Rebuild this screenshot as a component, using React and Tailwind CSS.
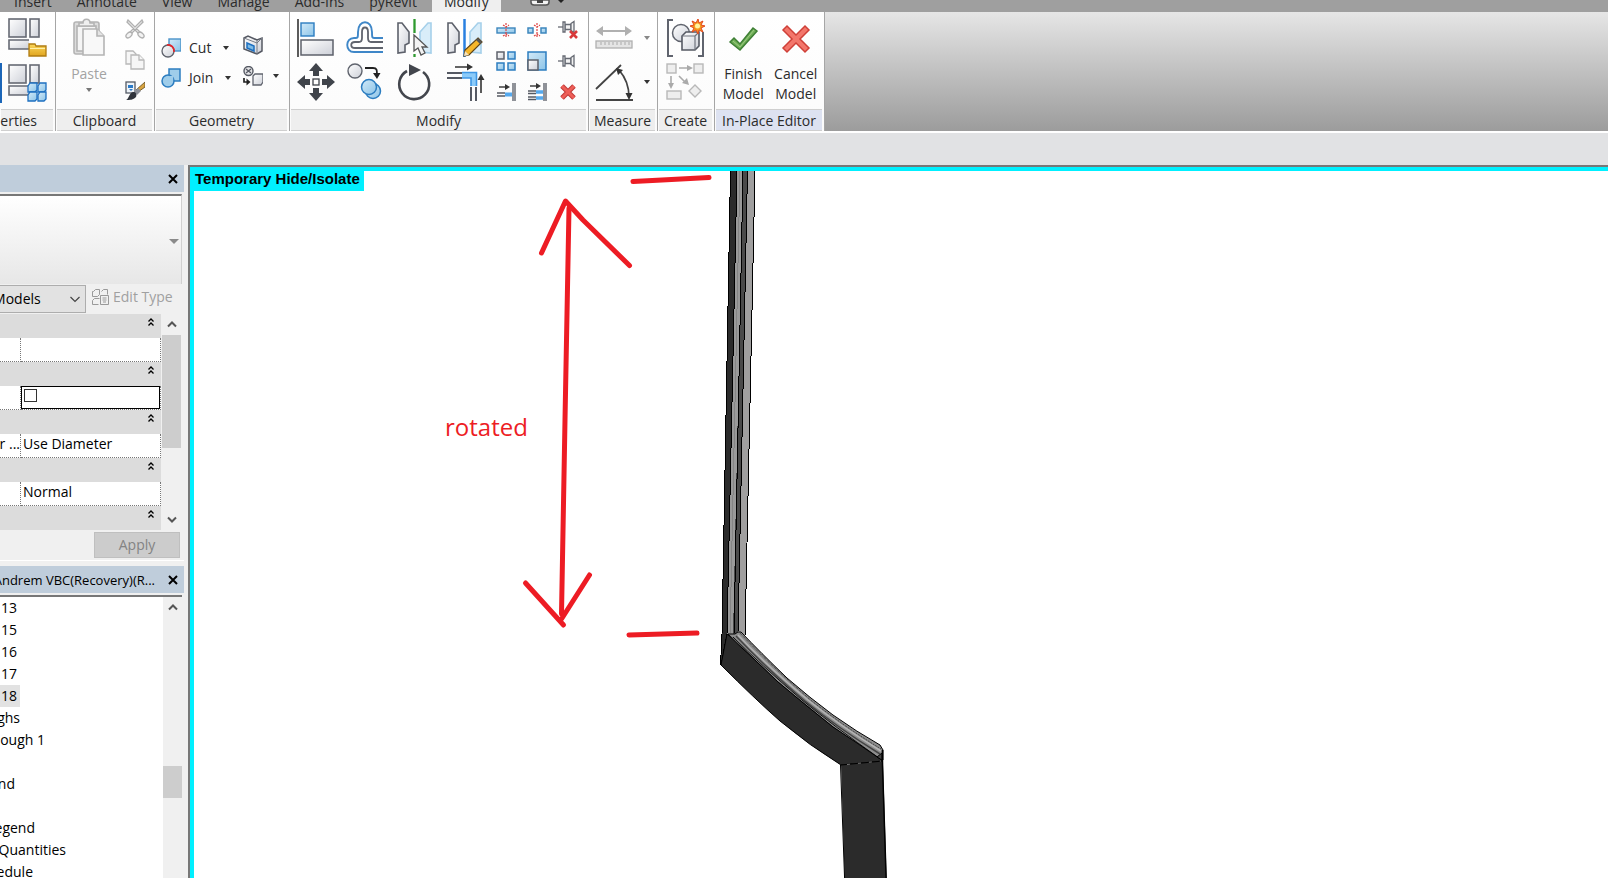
const tabs = ['Insert', 'Annotate', 'View', 'Manage', 'Add-Ins', 'pyRevit', 'Modify'];

const properties = [
  { name: '', value: '' },
  { name: '', check: true },
  { name: 'or ...', value: 'Use Diameter' },
  { name: '', value: 'Normal' },
];

const browserItems = [
  { text: '13', pad: 'pl-px' },
  { text: '15', pad: 'pl-px' },
  { text: '16', pad: 'pl-px' },
  { text: '17', pad: 'pl-px' },
  { text: '18', pad: 'pl-px', selected: true },
  { text: 'ghs', clip: 'w-5' },
  { text: 'ough 1', clip: 'w-[45px]' },
  { text: '' },
  { text: 'nd', clip: 'w-[15px]' },
  { text: '' },
  { text: 'egend', clip: 'w-[35px]' },
  { text: 'Quantities', clip: 'w-[66px]' },
  { text: 'edule', clip: 'w-[33px]' },
];

const Gradients = () => (
  <svg className="absolute size-0" aria-hidden="true">
    <defs>
      <linearGradient id="steel" x1="0" y1="0" x2="1" y2="1">
        <stop offset="0" stopColor="#ffffff" />
        <stop offset="1" stopColor="#cdd0d8" />
      </linearGradient>
      <linearGradient id="sky" x1="0" y1="0" x2="1" y2="1">
        <stop offset="0" stopColor="#d3eaf8" />
        <stop offset="1" stopColor="#8cc4e8" />
      </linearGradient>
      <linearGradient id="gold" x1="0" y1="0" x2="0" y2="1">
        <stop offset="0" stopColor="#fbd75c" />
        <stop offset="1" stopColor="#e0a520" />
      </linearGradient>
    </defs>
  </svg>
);

const Icon = ({ size = 40, children }) => (
  <svg width={size} height={size} viewBox={`0 0 ${size} ${size}`} fill="none" className="shrink-0">
    {children}
  </svg>
);

const Caret = ({ color = '#333' }) => (
  <svg width="6" height="4" viewBox="0 0 6 4" className="shrink-0">
    <path d="M0 0h6L3 4z" fill={color} />
  </svg>
);

const Windows = () => (
  <g fill="url(#steel)" stroke="#666a74" strokeWidth="1.6">
    <rect x="2" y="1" width="17" height="18" />
    <rect x="23" y="1" width="9" height="18" />
    <path d="M22 22H2v9h20" />
  </g>
);

const TypeProperties = () => (
  <Icon>
    <Windows />
    <path d="M22 26h6l1 2h10v10H22V27z" fill="url(#gold)" stroke="#b07c12" strokeWidth="1.3" />
    <path d="M23 30.500h15" stroke="#fff0a8" />
  </Icon>
);

const FamilyTypes = () => (
  <Icon>
    <Windows />
    <g fill="url(#sky)" stroke="#1d6fc0" strokeWidth="1.3">
      <path d="M21 22l2-3h7v7l-2 2h-7z" />
      <path d="M31 22l2-3h6v7l-2 2h-6z" />
      <path d="M21 31l2-3h7v7l-2 2h-7z" />
      <path d="M31 31l2-3h6v7l-2 2h-6z" />
    </g>
  </Icon>
);

const PasteIcon = () => (
  <Icon>
    <g stroke="#b4b4b4" strokeWidth="1.600">
      <rect x="5" y="4" width="25" height="32" rx="2" fill="#dcdcdc" />
      <rect x="8" y="8" width="19" height="25" fill="#f5f5f5" />
      <path d="M10 8V5h4c0-5 7-5 7 0h4v3z" fill="#efefef" />
      <path d="M14 11h14l7 7v19H14z" fill="#f8f8f8" />
      <path d="M28 11v7h7" fill="#e4e4e4" />
    </g>
  </Icon>
);

const CutClipIcon = () => (
  <Icon size={20}>
    <g stroke="#b0b0b0" strokeWidth="1.3" fill="#f3f3f3">
      <path d="M3 1l12 12-2 1L2 3zM17 1L5 13l2 1L18 3z" />
      <ellipse cx="4" cy="16" rx="3.500" ry="2.200" transform="rotate(-40 4 16)" />
      <ellipse cx="16" cy="16" rx="3.500" ry="2.200" transform="rotate(40 16 16)" />
    </g>
  </Icon>
);

const CopyClipIcon = () => (
  <Icon size={20}>
    <g stroke="#b8b8b8" strokeWidth="1.300" fill="#f6f6f6">
      <path d="M1 1h7l3 3v10H1z" />
      <path d="M6 5h8l5 5v9H6z" />
      <path d="M14 5v5h5" />
    </g>
  </Icon>
);

const MatchIcon = () => (
  <Icon size={20}>
    <rect x="1" y="1" width="9" height="11" fill="#eef3f8" stroke="#555b66" strokeWidth="1.300" />
    <path d="M3 4h5v3H3zM4 8l2 2 2-2" fill="#2a7ac8" />
    <path d="M20 1v5l-7 5-2-2z" fill="#d9a441" stroke="#77602e" />
    <path d="M13 7l3 3-4 4-3-3z" fill="#8c9099" />
    <path d="M8 11c3 0 4 2 3 5-3 3-6 3-10 3 3-1 3-7 7-8z" fill="#30343c" />
  </Icon>
);

const CutGeometry = () => (
  <Icon size={20}>
    <rect x="8" y="1" width="12" height="12" fill="url(#sky)" stroke="#4a93c9" strokeWidth="1.400" />
    <circle cx="7" cy="13" r="6" fill="url(#steel)" stroke="#5d616b" strokeWidth="1.300" />
    <path d="M6 7a6 6 0 0 1 7 7" stroke="#e5252a" strokeWidth="1.600" />
  </Icon>
);

const JoinGeometry = () => (
  <Icon size={20}>
    <g fill="#9fcdea" stroke="#2c7dc0" strokeWidth="1.500">
      <rect x="8" y="1" width="11" height="12" />
      <circle cx="7" cy="13" r="6" />
    </g>
    <path d="M8.700 8h3.500v4.300H8.700z" fill="#9fcdea" />
  </Icon>
);

const WallOpening = () => (
  <Icon size={20}>
    <path d="M1 3l4-2 9 4 5-2v13l-5 3L1 14z" fill="url(#steel)" stroke="#555963" strokeWidth="1.500" />
    <path d="M14 5v14M1 3l13 5 5-5" stroke="#777c86" />
    <path d="M4 8l7 3v5l-7-3z" fill="#7dbbe5" stroke="#1d6fc0" strokeWidth="1.500" />
  </Icon>
);

const Demolish = () => (
  <Icon size={20}>
    <circle cx="5.500" cy="5" r="4.500" fill="#e4e4e6" stroke="#555963" strokeWidth="1.400" />
    <path d="M3 3l5 4M8 3L3 7" stroke="#555963" strokeWidth="1.300" />
    <path d="M1 12v4h3" stroke="#222" strokeWidth="1.700" />
    <path d="M3.500 12.500l4 3.500-4 3.500z" fill="#222" />
    <path d="M10 10l2-2h8v8l-2 3h-8z" fill="url(#steel)" stroke="#60646e" strokeWidth="1.300" />
  </Icon>
);

const AlignIcon = () => (
  <Icon>
    <path d="M2 1v38" stroke="#333" strokeWidth="1.600" />
    <rect x="5" y="5" width="13" height="13" fill="url(#sky)" stroke="#2c7dc0" strokeWidth="1.400" />
    <rect x="5" y="22" width="32" height="15" fill="url(#steel)" stroke="#5d616b" strokeWidth="1.500" />
  </Icon>
);

const OffsetIcon = () => (
  <Icon>
    <path d="M37 34H8c-9 0-9-14 0-14h2c2 0 2-1 2-6 0-13 14-13 14 0 0 5 0 6 2 6h9" stroke="#3f87c8" strokeWidth="1.900" />
    <path d="M37 30H9c-5 0-5-6 0-6h4c2 0 3-1 3-4v-6c0-6 6-6 6 0v6c0 3 1 4 3 4h12" stroke="#60646e" strokeWidth="1.800" />
  </Icon>
);

const MirrorShapes = () => (
  <g strokeWidth="1.600">
    <path d="M2 5h4l7 9v11l-4 2v7l-7 1z" fill="url(#steel)" stroke="#5d616b" />
    <path d="M35 5h-3l-8 9v20l11 1z" fill="#d9edf9" stroke="#a6d0ea" />
  </g>
);

const MirrorPick = () => (
  <Icon>
    <MirrorShapes />
    <path d="M18.500 1v14M18.500 36v3" stroke="#2f9a2f" strokeWidth="2.300" />
    <path d="M18 17v16l4-3 3 7 4-2-3-6h5z" fill="#f4f4f4" stroke="#555" strokeWidth="1.300" />
  </Icon>
);

const MirrorDraw = () => (
  <Icon>
    <MirrorShapes />
    <path d="M18.500 1v38" stroke="#2a80e0" strokeWidth="2.500" />
    <path d="M32 20l4 4-13 13-5 1 1-6z" fill="#f5b62a" stroke="#5f4418" strokeWidth="1.200" />
    <path d="M30 22l2-2 4 4-2 2z" fill="#555" />
    <path d="M19 33l4 4-5 1z" fill="#f4e2bd" />
  </Icon>
);

const MoveIcon = () => (
  <Icon>
    <g fill="#40444b">
      <path d="M20 1l7 8h-4v5h-6V9h-4zM20 39l7-8h-4v-5h-6v5h-4z" />
      <path d="M1 20l8-7v4h5v6H9v4zM39 20l-8-7v4h-5v6h5v4z" />
    </g>
    <rect x="17" y="17" width="6" height="6" fill="#fff" stroke="#40444b" strokeWidth="1.300" />
  </Icon>
);

const CopyIcon = () => (
  <Icon>
    <circle cx="9" cy="9" r="7" fill="url(#steel)" stroke="#60646e" strokeWidth="1.400" />
    <path d="M19 6h8c4 0 4 2 4 7" stroke="#222" strokeWidth="1.800" />
    <path d="M27 11h7.500L31 17z" fill="#222" />
    <g fill="url(#sky)" stroke="#2c7dc0" strokeWidth="1.500">
      <circle cx="27" cy="29" r="7.500" />
      <circle cx="23" cy="25" r="7.500" />
    </g>
  </Icon>
);

const RotateIcon = () => (
  <Icon>
    <path d="M11 9a15 15 0 1 0 16 1" stroke="#43464d" strokeWidth="2.600" />
    <path d="M13 2l12 6-12 6z" fill="#43464d" />
  </Icon>
);

const TrimCorner = () => (
  <Icon>
    <path d="M1 11h15M1 16h15M25 25v14M30 25v14" stroke="#555963" strokeWidth="2" />
    <path d="M16 10h15v14h-6v-8h-9z" fill="#8ccbf9" />
    <path d="M16 10.500h14.500V24M16 16h9v8" stroke="#3f97e5" strokeWidth="1.600" />
    <path d="M9 5h14M35 31V16" stroke="#333" strokeWidth="1.600" />
    <path d="M21 1.500l6 3.500-6 3.500zM31.500 18l3.500-6 3.500 6z" fill="#333" />
  </Icon>
);

const SplitIcon = () => (
  <Icon size={20}>
    <rect x="1" y="8" width="18" height="5" fill="url(#sky)" stroke="#3c86bd" strokeWidth="1.400" />
    <path d="M10 3v15M7 5l3 2 3-2M7 16l3-2 3 2" stroke="#d44" strokeWidth="1.200" strokeDasharray="2 1" />
  </Icon>
);

const SplitGapIcon = () => (
  <Icon size={20}>
    <g fill="url(#sky)" stroke="#3c86bd" strokeWidth="1.500">
      <rect x="1" y="8" width="5" height="5" />
      <rect x="14" y="8" width="5" height="5" />
    </g>
    <path d="M10 3v15M7 5l3 2 3-2M7 16l3-2 3 2" stroke="#d44" strokeWidth="1.200" strokeDasharray="2 1" />
  </Icon>
);

const Pin = () => (
  <g fill="#f2f2f2" stroke="#666a73" strokeWidth="1.300">
    <path d="M0 10h5" />
    <path d="M7 7.500h6v5H7z" />
    <path d="M5 5h2v10H5zM13 6.500l3-2v11l-3-2z" />
  </g>
);

const UnpinIcon = () => (
  <Icon size={20}>
    <g transform="translate(0 -3)">
      <Pin />
    </g>
    <path d="M12 11l7 7M19 11l-7 7" stroke="#d8393a" strokeWidth="2.600" />
  </Icon>
);

const PinIcon = () => (
  <Icon size={20}>
    <Pin />
  </Icon>
);

const ArrayIcon = () => (
  <Icon size={20}>
    <rect x="1" y="1" width="7" height="7" fill="url(#steel)" stroke="#5d616b" strokeWidth="1.500" />
    <g fill="url(#sky)" stroke="#2c7dc0" strokeWidth="1.500">
      <rect x="12" y="1" width="7" height="7" />
      <rect x="1" y="12" width="7" height="7" />
      <rect x="12" y="12" width="7" height="7" />
    </g>
  </Icon>
);

const ScaleIcon = () => (
  <Icon size={20}>
    <rect x="1" y="1" width="18" height="18" fill="url(#sky)" stroke="#2c7dc0" strokeWidth="1.500" />
    <rect x="1" y="9" width="10" height="10" fill="url(#steel)" stroke="#5d616b" strokeWidth="1.500" />
  </Icon>
);

const TrimSingle = () => (
  <Icon size={20}>
    <path d="M3 5h7" stroke="#333" strokeWidth="1.400" />
    <path d="M9 2l5 3-5 3z" fill="#333" />
    <path d="M1 11h8M1 14h8M17 1v18M19 1v18" stroke="#555963" strokeWidth="1.300" />
    <path d="M9 12.500h7" stroke="#55a9ee" strokeWidth="4" />
  </Icon>
);

const TrimMultiple = () => (
  <Icon size={20}>
    <path d="M3 4h7" stroke="#333" strokeWidth="1.400" />
    <path d="M9 1l5 3-5 3z" fill="#333" />
    <path d="M1 9h8M1 11.500h8M1 15h8M1 17.500h8M17 1v18M19 1v18" stroke="#555963" strokeWidth="1.300" />
    <path d="M9 10h7M9 16h7" stroke="#55a9ee" strokeWidth="3.500" />
  </Icon>
);

const DeleteIcon = () => (
  <Icon size={20}>
    <path d="M4 4l12 12M16 4L4 16" stroke="#c03a38" strokeWidth="5" />
    <path d="M4 4l12 12M16 4L4 16" stroke="#ee5f58" strokeWidth="3" />
  </Icon>
);

const MeasureIcon = () => (
  <Icon>
    <path d="M5 13h28" stroke="#b0b0b0" strokeWidth="2" />
    <path d="M1 13l7-5v10zM37 13l-7-5v10z" fill="#b0b0b0" />
    <rect x="1" y="23" width="36" height="7" fill="#e4e4e4" stroke="#b0b0b0" strokeWidth="1.300" />
    <path d="M6 24v3M10 24v3M14 24v3M18 24v3M22 24v3M26 24v3M30 24v3M34 24v3" stroke="#aaa" />
  </Icon>
);

const AngleIcon = () => (
  <Icon>
    <path d="M1 38h37M1 27L26 3" stroke="#444" strokeWidth="1.800" />
    <path d="M24 8c7 8 10 16 10 27" stroke="#444" strokeWidth="1.800" />
    <path d="M21 6l7 2-5 5zM30.500 31h7L34 38z" fill="#333" />
  </Icon>
);

const CreateGroup = () => (
  <Icon>
    <path d="M8 2H3v36h5M33 38h5V14" stroke="#60646e" strokeWidth="2" />
    <circle cx="16" cy="15" r="8.500" fill="url(#steel)" stroke="#60646e" strokeWidth="1.500" />
    <path d="M17 18l4-4h13v14l-4 4H17z" fill="url(#steel)" stroke="#555963" strokeWidth="1.600" />
    <path d="M17 18h13v14M30 18l4-4" stroke="#70747e" strokeWidth="1.200" />
    <path d="M33 1l1 4 4-2-2 4 4 1-4 2 2 4-4-2-1 4-2-4-4 2 2-4-4-2 4-1-2-4 4 2z" fill="#f59a1d" stroke="#e2451c" />
    <circle cx="32.500" cy="8" r="2.500" fill="#fff4a0" />
  </Icon>
);

const CreateSimilar = () => (
  <Icon>
    <g fill="#eee" stroke="#b8b8b8" strokeWidth="1.400">
      <rect x="2" y="2" width="9" height="9" />
      <rect x="29" y="2" width="9" height="9" />
      <rect x="2" y="29" width="14" height="8" />
      <path d="M30 23l6 6-6 6-6-6z" />
    </g>
    <path d="M14 6h9M6 14v8M14 14l6 6" stroke="#aaa" strokeWidth="1.600" />
    <path d="M22 3l6 3-6 3zM3 21h6l-3 6zM24 23l-7-2 5-5z" fill="#aaa" />
  </Icon>
);

const FinishIcon = () => (
  <Icon size={32}>
    <path d="M3 18l4-4 6 6L26 4l4 3-17 19z" fill="#6fae55" stroke="#3e7f35" strokeWidth="1.500" />
    <path d="M6 17l7 6L27 6" stroke="#9ccb84" />
  </Icon>
);

const CancelIcon = () => (
  <Icon size={32}>
    <path d="M7 2l9 9 9-9 4 4-9 9 9 9-4 4-9-9-9 9-4-4 9-9-9-9z" fill="#f3766b" stroke="#cf4038" strokeWidth="1.500" />
  </Icon>
);

const IconButton = ({ label, children }) => (
  <button type="button" aria-label={label} className="flex shrink-0 items-center">
    {children}
  </button>
);

const Panel = ({ title, width, footer = 'bg-[#eeeeee]', children }) => (
  <section className={`flex shrink-0 flex-col border-r border-[#a6a6a6] bg-linear-to-b from-white to-[#fbfbfb] ${width}`}>
    <div className="mt-px flex h-24 items-start">{children}</div>
    <h2 className={`ml-px mr-0.5 flex h-[22px] items-center justify-center border-y border-y-[#cfcfcf] pt-0.5 leading-5 ${footer}`}>
      {title}
    </h2>
  </section>
);

const TabBar = () => (
  <nav className="flex h-3 shrink-0 items-end gap-px overflow-hidden bg-[#9f9f9f] pl-0.5">
    {tabs.map((tab) => (
      <button
        key={tab}
        type="button"
        className={`shrink-0 px-3 leading-5 ${tab === 'Modify' ? 'ml-0.5 bg-[#efefef]' : ''}`}
      >
        {tab}
      </button>
    ))}
    <button type="button" aria-label="Ribbon options" className="ml-7 flex h-3 items-start gap-2">
      <svg width="20" height="8" viewBox="0 0 20 8" fill="none">
        <path d="M1 0v2c0 2 1 3 3 3h12c2 0 3-1 3-3V0z" fill="#f4f4f4" stroke="#555" strokeWidth="1.500" />
        <path d="M7 0h6v3H7z" fill="#444" />
      </svg>
      <svg width="6" height="4" viewBox="0 0 6 4">
        <path d="M0 0h6L3 3z" fill="#222" />
      </svg>
    </button>
  </nav>
);

const Ribbon = () => (
  <div className="flex h-[119px] shrink-0 overflow-hidden bg-linear-to-b from-[#e6e6e6] to-[#9c9c9c]">
    <Panel title={<span className="flex w-full justify-end pr-4">Properties</span>} width="w-14 overflow-hidden">
      <div className="mb-1.5 h-10 w-0.5 shrink-0 self-end border-r-2 border-[#1c66b8]" />
      <div className="ml-[5px] mt-[5px] flex flex-col gap-1.5">
        <IconButton label="Family category"><TypeProperties /></IconButton>
        <IconButton label="Family types"><FamilyTypes /></IconButton>
      </div>
    </Panel>
    <Panel title="Clipboard" width="w-[99px]">
      <button type="button" className="ml-3 mt-[5px] flex w-[42px] flex-col items-center text-[#a3a3a3]">
        <PasteIcon />
        <span className="mt-1.5 leading-5">Paste</span>
        <span className="mt-1"><Caret color="#777" /></span>
      </button>
      <div className="ml-[15px] mt-1.5 flex flex-col gap-[11px]">
        <IconButton label="Cut to clipboard"><CutClipIcon /></IconButton>
        <IconButton label="Copy to clipboard"><CopyClipIcon /></IconButton>
        <IconButton label="Match type"><MatchIcon /></IconButton>
      </div>
    </Panel>
    <Panel title="Geometry" width="w-[135px]">
      <div className="ml-1.5 mt-[25px] flex flex-col gap-2.5">
        <button type="button" className="flex items-center">
          <CutGeometry />
          <span className="ml-2 mr-3 leading-5">Cut</span>
          <Caret />
        </button>
        <button type="button" className="flex items-center">
          <JoinGeometry />
          <span className="ml-2 mr-3 leading-5">Join</span>
          <Caret />
        </button>
      </div>
      <div className="ml-3 mt-[22px] flex flex-col gap-[11px]">
        <IconButton label="Wall opening"><WallOpening /></IconButton>
        <button type="button" aria-label="Demolish" className="flex items-center gap-2.5">
          <Demolish />
          <Caret />
        </button>
      </div>
    </Panel>
    <Panel title="Modify" width="w-[299px]">
      <div className="ml-1.5 mt-[5px] grid grid-cols-4 gap-x-[10px] gap-y-1">
        <IconButton label="Align"><AlignIcon /></IconButton>
        <IconButton label="Offset"><OffsetIcon /></IconButton>
        <IconButton label="Mirror - pick axis"><MirrorPick /></IconButton>
        <IconButton label="Mirror - draw axis"><MirrorDraw /></IconButton>
        <IconButton label="Move"><MoveIcon /></IconButton>
        <IconButton label="Copy"><CopyIcon /></IconButton>
        <IconButton label="Rotate"><RotateIcon /></IconButton>
        <IconButton label="Trim to corner"><TrimCorner /></IconButton>
      </div>
      <div className="ml-2.5 mt-[7px] grid grid-cols-3 gap-[11px]">
        <IconButton label="Split element"><SplitIcon /></IconButton>
        <IconButton label="Split with gap"><SplitGapIcon /></IconButton>
        <IconButton label="Unpin"><UnpinIcon /></IconButton>
        <IconButton label="Array"><ArrayIcon /></IconButton>
        <IconButton label="Scale"><ScaleIcon /></IconButton>
        <IconButton label="Pin"><PinIcon /></IconButton>
        <IconButton label="Trim single"><TrimSingle /></IconButton>
        <IconButton label="Trim multiple"><TrimMultiple /></IconButton>
        <IconButton label="Delete"><DeleteIcon /></IconButton>
      </div>
    </Panel>
    <Panel title="Measure" width="w-[69px]">
      <div className="ml-1.5 mt-[5px] flex flex-col gap-1">
        <button type="button" aria-label="Measure" className="flex items-center gap-[9px]">
          <MeasureIcon />
          <Caret color="#888" />
        </button>
        <button type="button" aria-label="Angle" className="flex items-center gap-[9px]">
          <AngleIcon />
          <Caret />
        </button>
      </div>
    </Panel>
    <Panel title="Create" width="w-[57px]">
      <div className="ml-[7px] mt-[5px] flex flex-col gap-1">
        <IconButton label="Create group"><CreateGroup /></IconButton>
        <IconButton label="Create similar"><CreateSimilar /></IconButton>
      </div>
    </Panel>
    <Panel title="In-Place Editor" width="w-[110px]" footer="bg-[#dde2f1]">
      <div className="flex w-full justify-around px-0.5 pt-[11px]">
        <button type="button" className="flex w-12 flex-col items-center leading-5">
          <FinishIcon />
          <span className="mt-2">Finish Model</span>
        </button>
        <button type="button" className="flex w-12 flex-col items-center leading-5">
          <CancelIcon />
          <span className="mt-2">Cancel Model</span>
        </button>
      </div>
    </Panel>
  </div>
);

const CloseButton = ({ label }) => (
  <button type="button" aria-label={label} className="mr-1.5 shrink-0">
    <svg width="10" height="10" viewBox="0 0 10 10">
      <path d="M1 1l8 8M9 1L1 9" stroke="#000" strokeWidth="2" />
    </svg>
  </button>
);

const Chevron = ({ down }) => (
  <svg width="10" height="8" viewBox="0 0 10 8" fill="none" className="shrink-0">
    <path d={down ? 'M1 1.500l4 4 4-4' : 'M1 6.500l4-4 4 4'} stroke="#555" strokeWidth="2" />
  </svg>
);

const Collapse = () => (
  <svg width="6" height="8" viewBox="0 0 6 8" fill="none">
    <path d="M0.500 3.500L3 1l2.500 2.500M0.500 7.500L3 5l2.500 2.500" stroke="#000" strokeWidth="1.300" />
  </svg>
);

const GroupRow = () => (
  <tr className="h-6 bg-[#dcdcdc]">
    <th colSpan={2} className="p-0">
      <button type="button" aria-label="Collapse group" className="mb-2 ml-auto mr-[7px] block">
        <Collapse />
      </button>
    </th>
  </tr>
);

const PropertyRow = ({ row }) => (
  <tr className="h-6 bg-white">
    <td className="w-[21px] border-b border-r border-dotted border-[#777] p-0 align-top">
      <div className="flex w-5 justify-end overflow-hidden whitespace-nowrap leading-5">{row.name}</div>
    </td>
    <td className="border-b border-r border-dotted border-[#777] p-0 align-top">
      {row.check ? (
        <div className="flex h-[23px] items-start border border-black pl-0.5 pt-0.5">
          <input
            type="checkbox"
            aria-label="Visible"
            className="size-[13px] appearance-none border border-[#333] bg-white"
          />
        </div>
      ) : (
        <div className="h-5 pl-0.5 leading-5">{row.value}</div>
      )}
    </td>
  </tr>
);

const PropertiesPalette = () => (
  <section className="flex shrink-0 flex-col">
    <div className="flex h-[27px] items-center justify-end bg-[#bfcddb]">
      <CloseButton label="Close properties" />
    </div>
    <div className="mr-0.5 mt-0.5 flex h-[90px] items-center justify-end border-r border-t-2 border-r-[#d0d0d0] border-t-[#777] bg-linear-to-b from-white to-[#e7e7e7] pr-0.5 pt-1">
      <svg width="10" height="6" viewBox="0 0 10 6">
        <path d="M0 0h10L5 5z" fill="#8a8a8a" />
      </svg>
    </div>
    <div className="flex h-[30px] items-center">
      <div className="relative flex w-[86px] justify-end overflow-hidden">
        <select
          aria-label="Category"
          className="h-7 w-40 shrink-0 appearance-none border border-[#adadad] bg-[#e2e2e2] pl-3"
        >
          <option>Generic Models</option>
        </select>
        <svg width="10" height="7" viewBox="0 0 10 7" fill="none" className="pointer-events-none absolute right-1.5 top-[11px]">
          <path d="M0.500 1l4.500 4.500L9.500 1" stroke="#444" strokeWidth="1.200" />
        </svg>
      </div>
      <button type="button" className="flex items-center gap-1 pb-1 pl-1.5 text-[#a0a0a0]">
        <svg width="17" height="17" viewBox="0 0 17 17" fill="none" stroke="#999">
          <path d="M1.500 2.500l2-2h4v5l-2 2h-5v-5zM9.500 2.500l2-2h4v5M0.500 11.500l2-2h5M0.500 11.500v4h6M8.500 6.500h8v9h-8z" />
          <path d="M10.500 9h4M10.500 11h4M11 13h3" />
        </svg>
        <span className="leading-5">Edit Type</span>
      </button>
    </div>
    <div className="flex h-[216px]">
      <table className="w-[161px] shrink-0 border-separate border-spacing-0">
        <tbody>
          {properties.flatMap((row, i) => [<GroupRow key={`g${i}`} />, <PropertyRow key={`p${i}`} row={row} />])}
          <GroupRow />
        </tbody>
      </table>
      <div className="ml-px flex w-[19px] flex-col items-center py-1.5">
        <Chevron />
        <div className="mb-auto mt-[7px] h-[113px] w-full bg-[#cdcdcd]" />
        <Chevron down />
      </div>
    </div>
    <div className="flex h-[31px] items-center justify-end border-b border-white pr-1">
      <button type="button" disabled className="h-[26px] w-[86px] border border-[#bfbfbf] bg-[#cccccc] text-[#838383]">
        Apply
      </button>
    </div>
  </section>
);

const ProjectBrowser = () => (
  <section className="mt-[5px] flex min-h-0 flex-1 flex-col">
    <div className="flex h-[27px] shrink-0 items-center justify-between bg-[#bfcddb]">
      <h2 className="flex w-[155px] justify-end overflow-hidden whitespace-nowrap text-[13px] leading-5">
        Andrem VBC(Recovery)(R...
      </h2>
      <CloseButton label="Close browser" />
    </div>
    <div className="mr-0.5 mt-0.5 flex min-h-0 flex-1 border-t-2 border-[#777] bg-white">
      <ul className="min-w-0 flex-1 overflow-hidden">
        {browserItems.map((item, i) => (
          <li key={i} className="h-[22px] leading-[22px]">
            <span
              className={`flex h-full overflow-hidden whitespace-nowrap ${item.clip ? `justify-end ${item.clip}` : item.pad || ''} ${item.selected ? 'w-5 bg-[#e2e2e2]' : ''}`}
            >
              {item.text}
            </span>
          </li>
        ))}
      </ul>
      <div className="flex w-[19px] shrink-0 flex-col items-center bg-[#f0f0f0] pt-1.5">
        <Chevron />
        <div className="mt-[155px] h-8 w-full shrink-0 bg-[#cdcdcd]" />
      </div>
    </div>
  </section>
);

const Drawing = () => (
  <svg className="block h-full w-full" fill="none" aria-label="Rail model">
    <defs>
      <linearGradient id="rail" x1="0" x2="1">
        <stop offset="0" stopColor="#8b8b8b" />
        <stop offset="0.500" stopColor="#a9a9a9" />
        <stop offset="1" stopColor="#777" />
      </linearGradient>
    </defs>
    <g transform="translate(-194 -171)">
      {/* upright */}
      <g shapeRendering="crispEdges">
        <path d="M731 171H737L727 634L721 665Z" fill="#2b2b2b" />
        <path d="M737 171H743L733 636L727 634Z" fill="#9a9a9a" />
        <path d="M743 171H748L738 632L733 636Z" fill="#4a4a4a" />
        <path d="M748 171H755L745 636L738 632Z" fill="#a09f9f" />
        <path d="M730.500 171L722 634L720.500 665M737 171L727 634L721 665M743 171L734 634M747.500 171L738 632M755 171L745 636" stroke="#000" />
        <path d="M740 171L730 634" stroke="#858585" />
      </g>
      {/* curved part */}
      <path
        d="M735 634L738 632H741Q760 652 787 678Q810 698 833 715Q857 732 880 745L883 750V760L880 760Q857 744 833 727Q802 702 778 682L728 634Z"
        fill="#8d8d8d"
        stroke="#000"
      />
      <path d="M738 635Q766 665 808 700Q840 726 881 751" stroke="#b5b5b5" strokeWidth="1.500" />
      <path d="M736 636Q765 667 805 701Q838 728 880 754" stroke="#444" strokeWidth="1.500" />
      <path d="M733 637Q760 664 802 700Q835 727 879 758" stroke="#111" />
      <path d="M740 633Q768 663 810 699.500Q842 725 881 749" stroke="#222" strokeDasharray="1 1" />
      <path
        d="M727 634L758 663L778 682L802 702L833 727L857 743L883 761L841 765Q810 746 780 721Q755 699 721 665Z"
        fill="#2b2b2b"
        stroke="#000"
      />
      <path d="M877 757l5-4v7z" fill="#444" stroke="#000" />
      {/* lower column */}
      <path d="M841 765L883 761L887 890H845Z" fill="#2b2b2b" />
      <path d="M840.500 765L845 890" stroke="#000" />
      <path d="M882.500 750V765L886.500 890" stroke="#000" strokeWidth="1.500" />
      <path d="M841 765L883 761" stroke="#000" />
      <path d="M847 764.500l34-3.500" stroke="#777" strokeDasharray="3 8" />
      {/* markup */}
      <g stroke="#ed1c24" strokeWidth="5" strokeLinecap="round" strokeLinejoin="round">
        <path d="M633 181.500L662 180L709 177.500" />
        <path d="M541.500 253L565.500 201L583 220L629.500 265.500" />
        <path d="M569 208L565 420L561.500 614" />
        <path d="M525.500 583L563.500 625M561.500 619L589.500 575" />
        <path d="M629 635L697 633" />
      </g>
    </g>
  </svg>
);

const ModelView = () => (
  <main className="relative ml-1 min-w-0 flex-1 border-l-2 border-t-2 border-[#777]">
    <div className="h-full overflow-hidden border-l-4 border-t-4 border-[#00f0ff] bg-white">
      <Drawing />
    </div>
    <p className="absolute left-0 top-0 flex h-6 items-center bg-[#00f0ff] pl-[5px] pr-1 font-['Liberation_Sans',Arial,sans-serif] text-[15px] font-bold">
      Temporary Hide/Isolate
    </p>
    <p className="absolute left-[255px] top-[244px] text-2xl leading-8 text-[#ed1c24]">rotated</p>
  </main>
);

const App = () => {
  return (
    <div className="flex h-screen flex-col overflow-hidden bg-[#f0f0f0] font-['Open_Sans','Noto_Sans',sans-serif] text-sm text-[#2b2b2b]">
      <Gradients />
      <TabBar />
      <Ribbon />
      {/* options bar */}
      <div className="h-[34px] shrink-0 border-t-2 border-white bg-[#e1e2e4]"></div>
      <div className="flex min-h-0 flex-1 text-black">
        <aside className="flex w-[184px] shrink-0 flex-col">
          <PropertiesPalette />
          <ProjectBrowser />
        </aside>
        <ModelView />
      </div>
    </div>
  );
};

export default App;
